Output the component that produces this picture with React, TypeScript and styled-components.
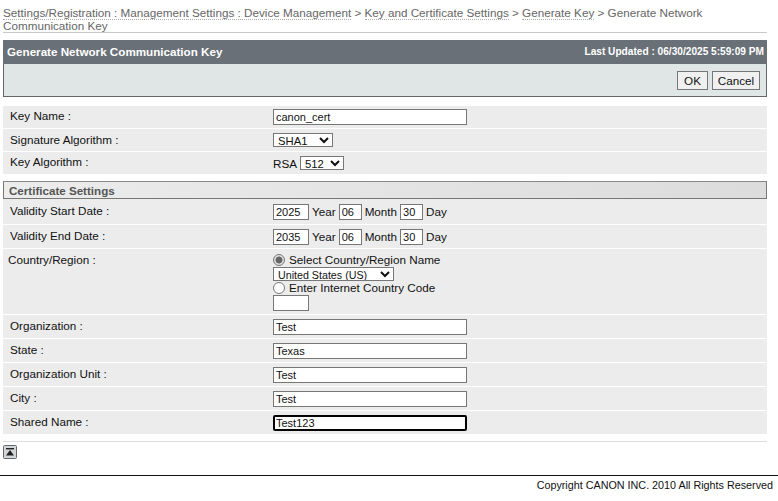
import { Fragment } from "react";
import styled, { createGlobalStyle } from "styled-components";

const GlobalStyle = createGlobalStyle`
  html, body {
    margin: 0;
    padding: 0;
    background: #fff;
    font-family: "Liberation Sans", Arial, sans-serif;
    font-size: 11.7px;
    color: #222;
  }
`;

const Page = styled.div`
  width: 778px;
  height: 501px;
  overflow: hidden;
  box-sizing: border-box;
`;

const Content = styled.div`
  width: 764px;
  margin-left: 3px;
`;

const Breadcrumb = styled.div`
  box-sizing: border-box;
  height: 33px;
  padding-top: 6px;
  line-height: 13px;
  color: #666;
  border-bottom: 1px solid #c8c8c8;
`;

const CrumbLine = styled.div`
  height: 13px;
  white-space: nowrap;
`;

const Crumb = styled.span`
  border-bottom: 1px dotted #aaa;
`;

const TitleBar = styled.div`
  box-sizing: border-box;
  height: 24px;
  margin-top: 7px;
  padding: 0 3px 2px 4px;
  display: flex;
  align-items: center;
  justify-content: space-between;
  background: #697077;
  color: #fff;
  font-weight: bold;
`;

const Heading = styled.span`
  font-size: 11.65px;
`;

const Updated = styled.span`
  font-size: 10.15px;
`;

const Toolbar = styled.div`
  box-sizing: border-box;
  height: 33px;
  padding: 7px 6px 0 0;
  display: flex;
  justify-content: flex-end;
  gap: 4px;
  background: #dfe6e5;
  border: 1px solid #666;
  border-top: none;
`;

const Button = styled.button<{ $w: number }>`
  box-sizing: border-box;
  height: 19px;
  min-width: ${(p) => p.$w}px;
  padding: 0;
  font-family: inherit;
  font-size: 11.7px;
  color: #111;
  background: #f0f0f0;
  border: 1px solid #777;
`;

const Form = styled.div<{ $top?: number }>`
  display: flex;
  flex-direction: column;
  gap: 1px;
  margin-top: ${(p) => p.$top ?? 0}px;
`;

const Row = styled.div<{ $h: number }>`
  box-sizing: border-box;
  height: ${(p) => p.$h}px;
  display: grid;
  grid-template-columns: 270px 1fr;
  background: #ececec;
  color: #111;
`;

const Label = styled.div<{ $top?: number; $left?: number }>`
  padding: ${(p) => p.$top ?? 3}px 0 0 ${(p) => p.$left ?? 7}px;
  line-height: 15px;
`;

const Value = styled.div`
  display: flex;
  align-items: center;
  gap: 3px;
`;

const Stack = styled.div`
  display: flex;
  flex-direction: column;
  align-items: flex-start;
  padding-top: 4px;
`;

const Choice = styled.label`
  box-sizing: border-box;
  display: flex;
  align-items: center;
  height: 14px;
  padding-bottom: 2px;
  gap: 4px;
`;

const Radio = styled.span<{ $on?: boolean }>`
  box-sizing: border-box;
  flex: none;
  width: 12px;
  height: 12px;
  margin-top: 2px;
  border-radius: 50%;
  border: 1px solid #777;
  background: ${(p) => (p.$on ? "radial-gradient(circle, #666 0 3.2px, #ddd 3.8px)" : "#fff")};
`;

const TextInput = styled.input<{ $w: number }>`
  box-sizing: border-box;
  width: ${(p) => p.$w}px;
  height: 16px;
  padding: 0 2px 0;
  font-family: inherit;
  font-size: 11px;
  color: #111;
  background: #fff;
  border: 1px solid #777;
  outline: none;
`;

const FocusInput = styled(TextInput)`
  border: 2px solid #000;
  border-radius: 2px;
  padding: 0 1px;
`;

const Select = styled.select<{ $w: number; $small?: boolean }>`
  box-sizing: border-box;
  width: ${(p) => p.$w}px;
  height: 14px;
  padding: 0;
  font-family: inherit;
  font-size: ${(p) => (p.$small ? 10.7 : 11.3)}px;
  line-height: 12px;
  color: #111;
  background: #fff;
  border: 1px solid #777;
  border-radius: 0;
`;

const SectionHead = styled.div`
  box-sizing: border-box;
  height: 18px;
  margin: 7px 0 0;
  padding-left: 5px;
  font-size: 11.6px;
  font-weight: bold;
  line-height: 17px;
  color: #555;
  background: linear-gradient(90deg, #ececec, #dcdcdc);
  border: 1px solid #777;
  border-top-color: #888;
`;

const Rule = styled.div`
  height: 1px;
  margin-top: 7px;
  background: #ddd;
`;

const TopLink = styled.a`
  display: block;
  width: 14px;
  height: 14px;
  margin-top: 3px;
`;

const Footer = styled.div`
  margin-top: 16px;
  padding: 2px 5px 0 0;
  border-top: 1px solid #111;
  text-align: right;
  font-size: 10.77px;
  line-height: 15px;
  color: #111;
`;

const crumbs = [
  "Settings/Registration : Management Settings : Device Management",
  "Key and Certificate Settings",
  "Generate Key",
];

const simpleFields = [
  { name: "Organization :", value: "Test" },
  { name: "State :", value: "Texas" },
  { name: "Organization Unit :", value: "Test" },
  { name: "City :", value: "Test" },
];

const DateInputs = ({ year }: { year: string }) => (
  <Value>
    <TextInput $w={36} defaultValue={year} />
    Year
    <TextInput $w={23} defaultValue="06" />
    Month
    <TextInput $w={23} defaultValue="30" />
    Day
  </Value>
);

const App = () => {
  return (
    <Page>
      <GlobalStyle />
      <Content>
        <Breadcrumb>
          <CrumbLine>
            {crumbs.map((c) => (
              <Fragment key={c}>
                <Crumb>{c}</Crumb>
                {" > "}
              </Fragment>
            ))}
            Generate Network
          </CrumbLine>
          <CrumbLine>Communication Key</CrumbLine>
        </Breadcrumb>

        <TitleBar>
          <Heading>Generate Network Communication Key</Heading>
          <Updated>Last Updated : 06/30/2025 5:59:09 PM</Updated>
        </TitleBar>
        <Toolbar>
          <Button $w={31}>OK</Button>
          <Button $w={48}>Cancel</Button>
        </Toolbar>

        <Form $top={9}>
          <Row $h={22}>
            <Label $top={2}>Key Name :</Label>
            <Value>
              <TextInput $w={194} defaultValue="canon_cert" />
            </Value>
          </Row>
          <Row $h={22}>
            <Label>Signature Algorithm :</Label>
            <Value>
              <Select $w={60} defaultValue="SHA1">
                <option>SHA1</option>
              </Select>
            </Value>
          </Row>
          <Row $h={22}>
            <Label $top={2}>Key Algorithm :</Label>
            <Value>
              RSA
              <Select $w={44} defaultValue="512">
                <option>512</option>
              </Select>
            </Value>
          </Row>
        </Form>

        <SectionHead>Certificate Settings</SectionHead>

        <Form>
          <Row $h={25}>
            <Label $top={4}>Validity Start Date :</Label>
            <DateInputs year="2025" />
          </Row>
          <Row $h={23}>
            <Label>Validity End Date :</Label>
            <DateInputs year="2035" />
          </Row>
          <Row $h={65}>
            <Label $left={5}>Country/Region :</Label>
            <Stack>
              <Choice>
                <Radio $on />
                Select Country/Region Name
              </Choice>
              <Select $w={121} $small defaultValue="us">
                <option value="us">United States (US)</option>
              </Select>
              <Choice>
                <Radio />
                Enter Internet Country Code
              </Choice>
              <TextInput $w={36} />
            </Stack>
          </Row>
          {simpleFields.map((f) => (
            <Row $h={23} key={f.name}>
              <Label>{f.name}</Label>
              <Value>
                <TextInput $w={194} defaultValue={f.value} />
              </Value>
            </Row>
          ))}
          <Row $h={23}>
            <Label>Shared Name :</Label>
            <Value>
              <FocusInput $w={194} defaultValue="Test123" />
            </Value>
          </Row>
        </Form>

        <Rule />
        <TopLink href="#top" aria-label="Back to top">
          <svg width="14" height="14" viewBox="0 0 14 14">
            <rect x="0.5" y="0.5" width="13" height="13" rx="1" fill="#d2d6d8" stroke="#666" />
            <rect x="3" y="3" width="8" height="1.4" fill="#222" />
            <path d="M7 5 L11 10.5 H3 Z" fill="#222" />
          </svg>
        </TopLink>
      </Content>
      <Footer>Copyright CANON INC. 2010 All Rights Reserved</Footer>
    </Page>
  );
};

export default App;
